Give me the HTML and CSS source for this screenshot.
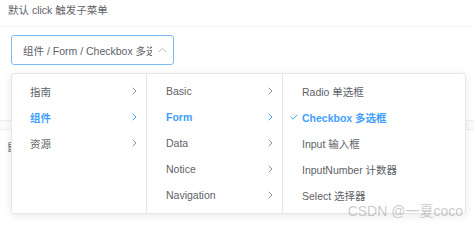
FILE: index.html
```html
<!DOCTYPE html>
<html lang="zh-CN">
<head>
<meta charset="utf-8">
<title>Cascader</title>
<link rel="stylesheet" href="styles.css">
</head>
<body>
<div class="page">
  <div class="title">默认 click 触发子菜单</div>
  <div class="stage">
    <div class="picker">
      <div class="input">
        <span class="input-text">组件 / Form / Checkbox 多选框</span>
        <svg class="caret" width="9" height="6" viewBox="0 0 9 6"><polyline points="0.8,5 4.5,1.2 8.2,5" fill="none" stroke="#b4b8bf" stroke-width="1"/></svg>
      </div>
      <div class="panel">
        <ul class="menu menu-1">
          <li class="node"><span>指南</span><svg class="arr" width="5" height="8" viewBox="0 0 5 8"><polyline points="0.8,0.8 4,4 0.8,7.2" fill="none" stroke="#8c9096" stroke-width="1"/></svg></li>
          <li class="node active"><span>组件</span><svg class="arr" width="5" height="8" viewBox="0 0 5 8"><polyline points="0.8,0.8 4,4 0.8,7.2" fill="none" stroke="#409eff" stroke-width="1"/></svg></li>
          <li class="node"><span>资源</span><svg class="arr" width="5" height="8" viewBox="0 0 5 8"><polyline points="0.8,0.8 4,4 0.8,7.2" fill="none" stroke="#8c9096" stroke-width="1"/></svg></li>
        </ul>
        <ul class="menu menu-2">
          <li class="node"><span>Basic</span><svg class="arr" width="5" height="8" viewBox="0 0 5 8"><polyline points="0.8,0.8 4,4 0.8,7.2" fill="none" stroke="#8c9096" stroke-width="1"/></svg></li>
          <li class="node active"><span>Form</span><svg class="arr" width="5" height="8" viewBox="0 0 5 8"><polyline points="0.8,0.8 4,4 0.8,7.2" fill="none" stroke="#409eff" stroke-width="1"/></svg></li>
          <li class="node"><span>Data</span><svg class="arr" width="5" height="8" viewBox="0 0 5 8"><polyline points="0.8,0.8 4,4 0.8,7.2" fill="none" stroke="#8c9096" stroke-width="1"/></svg></li>
          <li class="node"><span>Notice</span><svg class="arr" width="5" height="8" viewBox="0 0 5 8"><polyline points="0.8,0.8 4,4 0.8,7.2" fill="none" stroke="#8c9096" stroke-width="1"/></svg></li>
          <li class="node"><span>Navigation</span><svg class="arr" width="5" height="8" viewBox="0 0 5 8"><polyline points="0.8,0.8 4,4 0.8,7.2" fill="none" stroke="#8c9096" stroke-width="1"/></svg></li>
        </ul>
        <ul class="menu menu-3">
          <li class="leaf"><span class="check"></span><span>Radio 单选框</span></li>
          <li class="leaf active"><span class="check"><svg width="8" height="6" viewBox="0 0 8 6"><polyline points="0.6,2.8 3,5.2 7.4,0.8" fill="none" stroke="#409eff" stroke-width="1"/></svg></span><span>Checkbox 多选框</span></li>
          <li class="leaf"><span class="check"></span><span>Input 输入框</span></li>
          <li class="leaf"><span class="check"></span><span>InputNumber 计数器</span></li>
          <li class="leaf"><span class="check"></span><span>Select 选择器</span></li>
        </ul>
      </div>
    </div>
    <div class="below">
      <div class="band"></div>
      <div class="below-title">鼠标 hover 触发子菜单</div>
    </div>
  </div>
  <div class="watermark">CSDN @一夏coco</div>
</div>
</body>
</html>
```

FILE: styles.css
```css
* { box-sizing: border-box; }
html, body { margin: 0; padding: 0; background: #fff; }
body {
  font-family: "Liberation Sans", Arial, "Noto Sans CJK SC", sans-serif;
  font-size: 10.5px;
  color: #606266;
  width: 474px;
  height: 223px;
  overflow: hidden;
}
.page { position: relative; height: 223px; }
.title {
  height: 27px;
  line-height: 20px;
  padding-left: 8px;
  border-bottom: 1px solid #f4f5f7;
  color: #5f6268;
}
.stage { padding-top: 8px; }
.picker { position: relative; margin-left: 11px; width: 163px; }
.input {
  width: 163px;
  height: 30px;
  border: 1px solid #7cb9f7;
  border-radius: 3px;
  display: flex;
  align-items: center;
  padding: 0 6px 0 11px;
  gap: 6px;
}
.input-text {
  flex: 1;
  white-space: nowrap;
  overflow: hidden;
  color: #606266;
}
.caret { flex: none; margin-right: 0; }
.panel {
  position: absolute;
  top: calc(100% + 8px);
  left: 0;
  z-index: 2;
  width: 455px;
  height: 141px;
  background: #fff;
  border: 1px solid #e4e7ed;
  border-radius: 3px;
  box-shadow: 0 2px 9px rgba(0, 0, 0, 0.09);
  display: flex;
}
.menu {
  list-style: none;
  margin: 0;
  padding: 4px 0;
  height: 100%;
}
.menu-1 { width: 135px; border-right: 1px solid #e4e7ed; }
.menu-2 { width: 136px; border-right: 1px solid #e4e7ed; }
.menu-3 { flex: 1; }
.node {
  height: 26px;
  display: flex;
  align-items: center;
  justify-content: space-between;
  padding: 0 9px 0 18px;
}
.menu-2 .node { padding: 0 9px 0 19px; }
.leaf {
  height: 26px;
  display: flex;
  align-items: center;
  padding-left: 7px;
}
.check { width: 12px; flex: none; display: flex; align-items: center; }
.active { color: #409eff; font-weight: bold; }
.arr { flex: none; }
.below { margin-top: 55px; }
.band {
  height: 10px;
  border-top: 1px solid #ebeef5;
  border-bottom: 1px solid #ebeef5;
  background: #fbfbfc;
}
.below-title {
  margin-top: 10px;
  padding-left: 7px;
  line-height: 14px;
  color: #606266;
}
.watermark {
  position: absolute;
  right: 11px;
  top: 203px;
  z-index: 3;
  font-size: 14px;
  line-height: 16px;
  color: rgba(150, 150, 150, 0.5);
}
```
